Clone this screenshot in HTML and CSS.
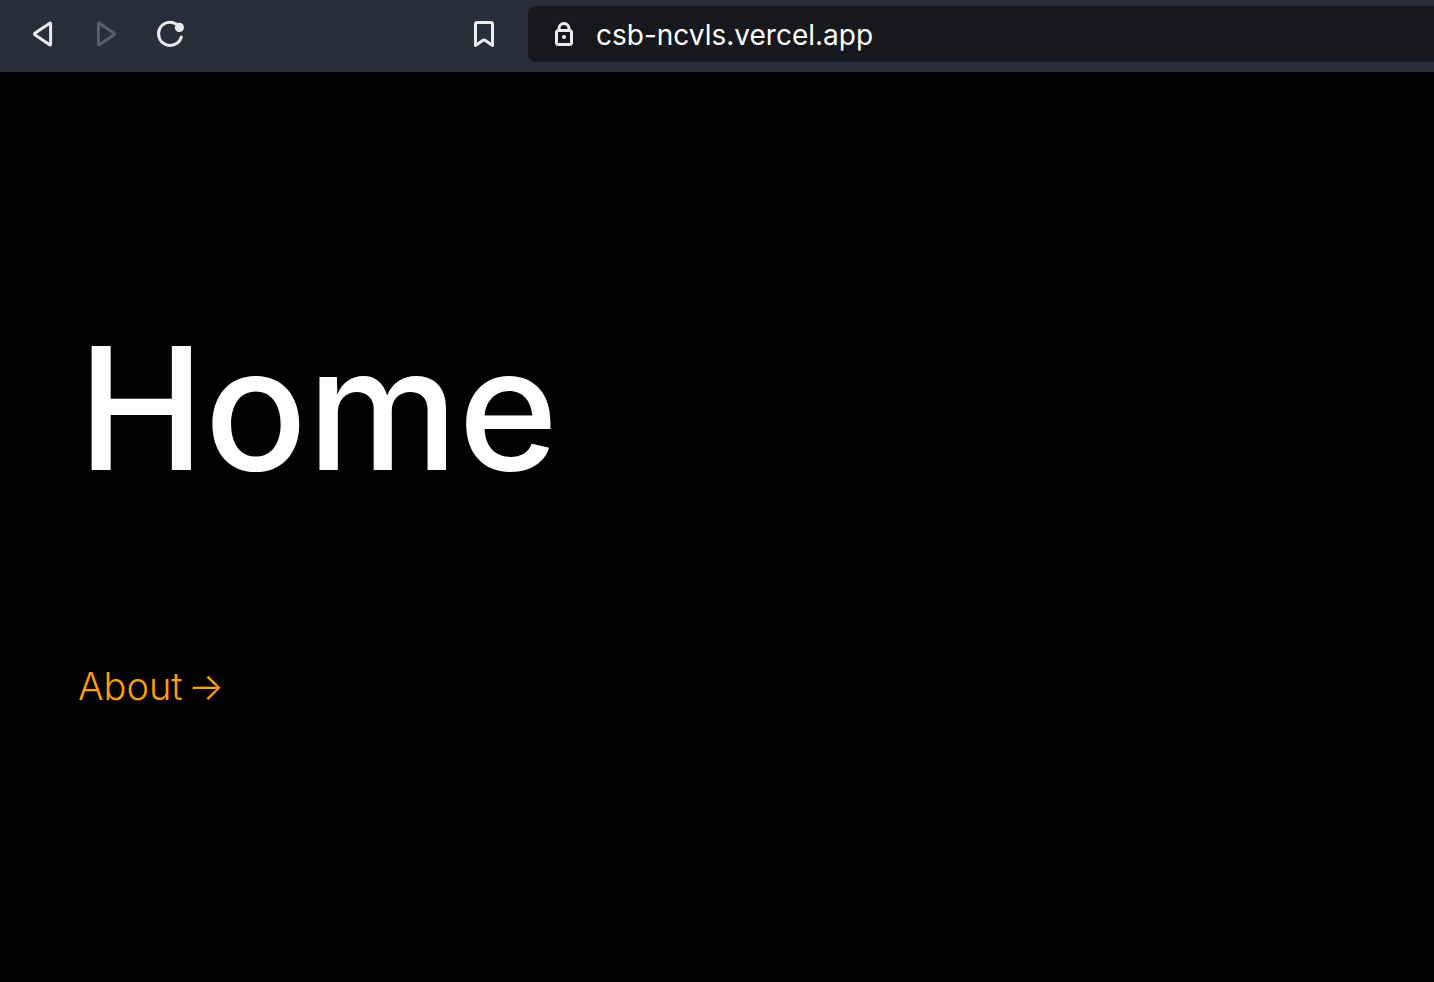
FILE: index.html
```
<!DOCTYPE html>
<html lang="en">
<head>
    <meta charset="UTF-8">
    <meta name="viewport" content="width=device-width, initial-scale=1.0">
    <title>Home</title>
    <link rel="stylesheet" href="styles.css">
</head>
<body>
    <header class="toolbar">
        <div class="nav-buttons">
            <button type="button" aria-label="Back">
                <svg width="32" height="32" viewBox="0 0 32 32"><path d="M23.3 5.4Q24.6 4.5 24.6 6V26Q24.6 27.5 23.3 26.6L9.2 17Q7.8 16 9.2 15Z"/></svg>
            </button>
            <button type="button" aria-label="Forward" disabled>
                <svg width="32" height="32" viewBox="0 0 32 32"><path d="M9.7 5.4Q8.4 4.5 8.4 6V26Q8.4 27.5 9.7 26.6L23.8 17Q25.2 16 23.8 15Z"/></svg>
            </button>
            <button type="button" aria-label="Reload">
                <svg width="32" height="32" viewBox="0 0 32 32"><path d="M22.3 6A11.6 11.6 0 1 0 27.3 19"/><circle class="dot" cx="25.4" cy="9.4" r="4.6"/></svg>
            </button>
        </div>
        <button type="button" aria-label="Bookmark">
            <svg width="32" height="32" viewBox="0 0 32 32"><path d="M7.5 6Q7.5 4.5 9 4.5H23Q24.5 4.5 24.5 6V27.5L17 22.3Q16 21.7 15 22.3L7.5 27.5Z"/></svg>
        </button>
        <div class="address">
            <svg width="32" height="32" viewBox="0 0 32 32"><rect x="8.5" y="12.5" width="15" height="14" rx="2"/><path d="M11 12V10.5A5 5 0 0 1 21 10.5V12"/><circle class="dot" cx="16" cy="19" r="2"/></svg>
            <input type="text" aria-label="Address" value="csb-ncvls.vercel.app">
        </div>
    </header>
    <main>
        <h1>Home</h1>
        <a href="#about">About <span>→</span></a>
    </main>
</body>
</html>
```

FILE: styles.css
```
body {
    margin: 0;
    background: #000;
    color: #fff;
    font-family: Inter, sans-serif;
}
.toolbar {
    display: flex;
    align-items: center;
    height: 56px;
    padding: 6px 0 10px 26px;
    background: #2a2d3a;
}
.nav-buttons {
    display: flex;
    gap: 32px;
    margin-right: 282px;
}
button {
    display: flex;
    padding: 0;
    border: none;
    background: none;
    color: #ebebef;
}
button:disabled {
    color: #5b5d69;
}
svg {
    flex: none;
    fill: none;
    stroke: currentColor;
    stroke-width: 3;
    stroke-linecap: round;
    stroke-linejoin: round;
}
.dot {
    fill: currentColor;
    stroke: none;
}
.address {
    display: flex;
    flex: 1;
    align-items: center;
    gap: 16px;
    height: 56px;
    margin-left: 28px;
    padding-left: 20px;
    border-radius: 8px 0 0 8px;
    background: #17181d;
    color: #ebebef;
}
input {
    flex: 1;
    min-width: 0;
    padding: 2px 0 0;
    border: none;
    outline: none;
    background: none;
    color: #fff;
    font: 28px Inter, sans-serif;
}
main {
    padding: 228px 78px 80px;
}
h1 {
    margin: 0 0 140px;
    font-size: 170px;
    font-weight: 500;
    line-height: 216px;
}
a {
    display: inline-flex;
    gap: 5px;
    color: #ff9d0f;
    font-size: 38px;
    font-weight: 300;
    line-height: 60px;
    text-decoration: none;
}
```
